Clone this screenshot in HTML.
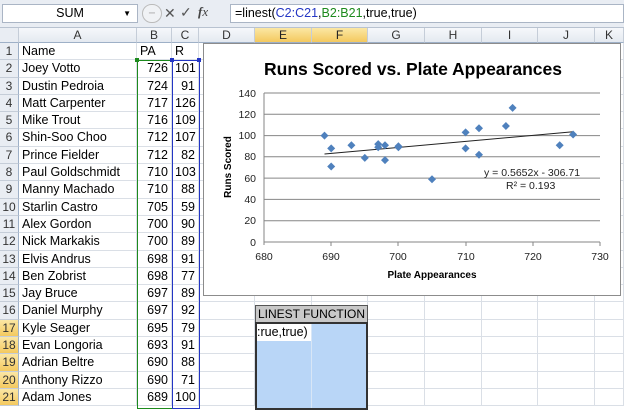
<!DOCTYPE html>
<html><head><meta charset="utf-8"><style>
*{margin:0;padding:0;box-sizing:border-box}
body{width:624px;height:410px;overflow:hidden;background:#fff;font-family:"Liberation Sans",Calibri,sans-serif;font-size:12.5px;position:relative;color:#000}
.abs{position:absolute}
.fb{left:0;top:0;width:624px;height:28px;background:#e9edf3;border-bottom:1px solid #b8c2d0}
.nm{left:2px;top:4px;width:136px;height:19px;background:#fff;border:1px solid #aab5c5;text-align:center;line-height:17px;font-size:12.5px}
.fx{left:230px;top:4px;width:394px;height:19px;background:#fff;border:1px solid #aab5c5;line-height:17px;padding-left:4px;font-size:12.5px}
.colh{top:28px;height:15px;background:linear-gradient(#f6f8fb,#e4e9f0);border-right:1px solid #c5cdd8;border-bottom:1px solid #9eb0c7;text-align:center;line-height:15px;color:#333;font-size:12px}
.colh.sel{background:linear-gradient(#fbe7a5,#f4c95f);color:#222}
.rowh{left:0;width:19px;background:#e9edf3;border-bottom:1px solid #c5cdd8;border-right:1px solid #9eb0c7;text-align:center;color:#333;font-size:12px}
.rowh.sel{background:linear-gradient(#fbe7a5,#f4c95f)}
.cell{border-bottom:1px solid #dadfe6;border-right:1px solid #dadfe6;white-space:nowrap;overflow:hidden;padding:0 3px;font-size:12.5px}
.r{text-align:right}
</style></head><body>
<div class="abs fb"></div>
<div class="abs nm">SUM <span style="position:absolute;right:6px;font-size:8px">▼</span></div>
<div class="abs" style="left:142px;top:4px;width:20px;height:19px;border:1px solid #bbb;border-radius:10px;background:#f0f2f5;color:#aaa;text-align:center;line-height:17px">−</div>
<div class="abs" style="left:164px;top:5px;font-size:14px;color:#555">✕</div>
<div class="abs" style="left:180px;top:4px;font-size:14px;color:#555">✓</div>
<div class="abs" style="left:198px;top:4px;font-size:13px;font-style:italic;font-family:'Liberation Serif',serif;color:#444"><b>f</b>x</div>
<div class="abs fx">=linest(<span style="color:#2436c4">C2:C21</span>,<span style="color:#1d8a1d">B2:B21</span>,true,true)</div>

<div class="abs colh" style="left:0;width:19px;background:#e9edf3"></div>
<div class="abs colh" style="left:19px;width:118px">A</div>
<div class="abs colh" style="left:137px;width:35px">B</div>
<div class="abs colh" style="left:172px;width:27px">C</div>
<div class="abs colh" style="left:199px;width:56px">D</div>
<div class="abs colh sel" style="left:255px;width:57px">E</div>
<div class="abs colh sel" style="left:312px;width:56px">F</div>
<div class="abs colh" style="left:368px;width:57px">G</div>
<div class="abs colh" style="left:425px;width:57px">H</div>
<div class="abs colh" style="left:482px;width:56px">I</div>
<div class="abs colh" style="left:538px;width:57px">J</div>
<div class="abs colh" style="left:595px;width:29px">K</div>

<div style="position:absolute;left:0;top:43px;width:624px">
<div style="display:grid;grid-template-columns:19px 118px 35px 27px 56px 57px 56px 57px 57px 56px 57px 29px;grid-auto-rows:17.3px;line-height:17px">
<div class="rowh">1</div><div class="cell">Name</div><div class="cell">PA</div><div class="cell">R</div><div class="cell"></div><div class="cell"></div><div class="cell"></div><div class="cell"></div><div class="cell"></div><div class="cell"></div><div class="cell"></div><div class="cell"></div>
<div class="rowh">2</div><div class="cell">Joey Votto</div><div class="cell r">726</div><div class="cell r">101</div><div class="cell"></div><div class="cell"></div><div class="cell"></div><div class="cell"></div><div class="cell"></div><div class="cell"></div><div class="cell"></div><div class="cell"></div>
<div class="rowh">3</div><div class="cell">Dustin Pedroia</div><div class="cell r">724</div><div class="cell r">91</div><div class="cell"></div><div class="cell"></div><div class="cell"></div><div class="cell"></div><div class="cell"></div><div class="cell"></div><div class="cell"></div><div class="cell"></div>
<div class="rowh">4</div><div class="cell">Matt Carpenter</div><div class="cell r">717</div><div class="cell r">126</div><div class="cell"></div><div class="cell"></div><div class="cell"></div><div class="cell"></div><div class="cell"></div><div class="cell"></div><div class="cell"></div><div class="cell"></div>
<div class="rowh">5</div><div class="cell">Mike Trout</div><div class="cell r">716</div><div class="cell r">109</div><div class="cell"></div><div class="cell"></div><div class="cell"></div><div class="cell"></div><div class="cell"></div><div class="cell"></div><div class="cell"></div><div class="cell"></div>
<div class="rowh">6</div><div class="cell">Shin-Soo Choo</div><div class="cell r">712</div><div class="cell r">107</div><div class="cell"></div><div class="cell"></div><div class="cell"></div><div class="cell"></div><div class="cell"></div><div class="cell"></div><div class="cell"></div><div class="cell"></div>
<div class="rowh">7</div><div class="cell">Prince Fielder</div><div class="cell r">712</div><div class="cell r">82</div><div class="cell"></div><div class="cell"></div><div class="cell"></div><div class="cell"></div><div class="cell"></div><div class="cell"></div><div class="cell"></div><div class="cell"></div>
<div class="rowh">8</div><div class="cell">Paul Goldschmidt</div><div class="cell r">710</div><div class="cell r">103</div><div class="cell"></div><div class="cell"></div><div class="cell"></div><div class="cell"></div><div class="cell"></div><div class="cell"></div><div class="cell"></div><div class="cell"></div>
<div class="rowh">9</div><div class="cell">Manny Machado</div><div class="cell r">710</div><div class="cell r">88</div><div class="cell"></div><div class="cell"></div><div class="cell"></div><div class="cell"></div><div class="cell"></div><div class="cell"></div><div class="cell"></div><div class="cell"></div>
<div class="rowh">10</div><div class="cell">Starlin Castro</div><div class="cell r">705</div><div class="cell r">59</div><div class="cell"></div><div class="cell"></div><div class="cell"></div><div class="cell"></div><div class="cell"></div><div class="cell"></div><div class="cell"></div><div class="cell"></div>
<div class="rowh">11</div><div class="cell">Alex Gordon</div><div class="cell r">700</div><div class="cell r">90</div><div class="cell"></div><div class="cell"></div><div class="cell"></div><div class="cell"></div><div class="cell"></div><div class="cell"></div><div class="cell"></div><div class="cell"></div>
<div class="rowh">12</div><div class="cell">Nick Markakis</div><div class="cell r">700</div><div class="cell r">89</div><div class="cell"></div><div class="cell"></div><div class="cell"></div><div class="cell"></div><div class="cell"></div><div class="cell"></div><div class="cell"></div><div class="cell"></div>
<div class="rowh">13</div><div class="cell">Elvis Andrus</div><div class="cell r">698</div><div class="cell r">91</div><div class="cell"></div><div class="cell"></div><div class="cell"></div><div class="cell"></div><div class="cell"></div><div class="cell"></div><div class="cell"></div><div class="cell"></div>
<div class="rowh">14</div><div class="cell">Ben Zobrist</div><div class="cell r">698</div><div class="cell r">77</div><div class="cell"></div><div class="cell"></div><div class="cell"></div><div class="cell"></div><div class="cell"></div><div class="cell"></div><div class="cell"></div><div class="cell"></div>
<div class="rowh">15</div><div class="cell">Jay Bruce</div><div class="cell r">697</div><div class="cell r">89</div><div class="cell"></div><div class="cell"></div><div class="cell"></div><div class="cell"></div><div class="cell"></div><div class="cell"></div><div class="cell"></div><div class="cell"></div>
<div class="rowh">16</div><div class="cell">Daniel Murphy</div><div class="cell r">697</div><div class="cell r">92</div><div class="cell"></div><div class="cell"></div><div class="cell"></div><div class="cell"></div><div class="cell"></div><div class="cell"></div><div class="cell"></div><div class="cell"></div>
<div class="rowh sel">17</div><div class="cell">Kyle Seager</div><div class="cell r">695</div><div class="cell r">79</div><div class="cell"></div><div class="cell"></div><div class="cell"></div><div class="cell"></div><div class="cell"></div><div class="cell"></div><div class="cell"></div><div class="cell"></div>
<div class="rowh sel">18</div><div class="cell">Evan Longoria</div><div class="cell r">693</div><div class="cell r">91</div><div class="cell"></div><div class="cell"></div><div class="cell"></div><div class="cell"></div><div class="cell"></div><div class="cell"></div><div class="cell"></div><div class="cell"></div>
<div class="rowh sel">19</div><div class="cell">Adrian Beltre</div><div class="cell r">690</div><div class="cell r">88</div><div class="cell"></div><div class="cell"></div><div class="cell"></div><div class="cell"></div><div class="cell"></div><div class="cell"></div><div class="cell"></div><div class="cell"></div>
<div class="rowh sel">20</div><div class="cell">Anthony Rizzo</div><div class="cell r">690</div><div class="cell r">71</div><div class="cell"></div><div class="cell"></div><div class="cell"></div><div class="cell"></div><div class="cell"></div><div class="cell"></div><div class="cell"></div><div class="cell"></div>
<div class="rowh sel">21</div><div class="cell">Adam Jones</div><div class="cell r">689</div><div class="cell r">100</div><div class="cell"></div><div class="cell"></div><div class="cell"></div><div class="cell"></div><div class="cell"></div><div class="cell"></div><div class="cell"></div><div class="cell"></div>
</div></div>

<div class="abs" style="left:137px;top:60px;width:36px;height:349px;border:1px solid #1d8a1d"></div>
<div class="abs" style="left:172px;top:60px;width:28px;height:349px;border:1px solid #2436c4"></div>
<div class="abs" style="left:135px;top:58px;width:4px;height:4px;background:#1d8a1d"></div>
<div class="abs" style="left:170px;top:58px;width:4px;height:4px;background:#2436c4"></div>
<div class="abs" style="left:197px;top:58px;width:4px;height:4px;background:#2436c4"></div>

<div class="abs" style="left:255px;top:305px;width:113px;height:18px;background:#c8c8c8;border:1px solid #555;text-align:center;line-height:16px;font-size:12px">LINEST FUNCTION</div>
<div class="abs" style="left:255px;top:322px;width:113px;height:88px;background:#b9d6f7;border:2px solid #333"></div>
<div class="abs" style="left:311px;top:324px;width:1px;height:84px;background:#d8e6f6"></div>
<div class="abs" style="left:257px;top:324px;width:54px;height:17px;background:#fff;line-height:16px;font-size:12.5px">:rue,true)</div>

<svg class="abs" style="left:0;top:0" width="624" height="410" font-family="Liberation Sans, sans-serif">
<rect x="203.5" y="43.5" width="417" height="252" fill="#fff" stroke="#8c8c8c"/>
<text x="413" y="75" text-anchor="middle" font-size="17.5" font-weight="bold">Runs Scored vs. Plate Appearances</text>
<g stroke="#868686" stroke-width="1">
<line x1="264" y1="93" x2="600" y2="93"/><line x1="264" y1="114.3" x2="600" y2="114.3"/><line x1="264" y1="135.6" x2="600" y2="135.6"/><line x1="264" y1="156.8" x2="600" y2="156.8"/><line x1="264" y1="178.1" x2="600" y2="178.1"/><line x1="264" y1="199.4" x2="600" y2="199.4"/><line x1="264" y1="220.7" x2="600" y2="220.7"/><line x1="264" y1="242" x2="600" y2="242"/>
<line x1="264" y1="93" x2="264" y2="245"/>
<line x1="331" y1="242" x2="331" y2="246"/><line x1="398" y1="242" x2="398" y2="246"/><line x1="466" y1="242" x2="466" y2="246"/><line x1="533" y1="242" x2="533" y2="246"/><line x1="600" y1="242" x2="600" y2="246"/>
</g>
<g font-size="10.5" text-anchor="end" fill="#222">
<text x="256" y="97">140</text><text x="256" y="118">120</text><text x="256" y="139">100</text><text x="256" y="160">80</text><text x="256" y="182">60</text><text x="256" y="203">40</text><text x="256" y="224">20</text><text x="256" y="246">0</text>
</g>
<g font-size="10.5" text-anchor="middle" fill="#222">
<text x="264" y="260">680</text><text x="331" y="260">690</text><text x="398" y="260">700</text><text x="466" y="260">710</text><text x="533" y="260">720</text><text x="600" y="260">730</text>
</g>
<text x="432" y="278" text-anchor="middle" font-size="10" font-weight="bold">Plate Appearances</text>
<text transform="translate(231,167) rotate(-90)" text-anchor="middle" font-size="10" font-weight="bold">Runs Scored</text>
<line x1="324.5" y1="154" x2="573.1" y2="131.8" stroke="#222" stroke-width="1"/>
<g fill="#4f81bd">
<path d="M573.1 130.5l4 4-4 4-4-4z"/><path d="M559.7 141.2l4 4-4 4-4-4z"/><path d="M512.6 103.9l4 4-4 4-4-4z"/><path d="M505.9 122l4 4-4 4-4-4z"/><path d="M479 124.2l4 4-4 4-4-4z"/><path d="M479 150.8l4 4-4 4-4-4z"/><path d="M465.6 128.4l4 4-4 4-4-4z"/><path d="M465.6 144.4l4 4-4 4-4-4z"/><path d="M432 175.2l4 4-4 4-4-4z"/><path d="M398.4 142.2l4 4-4 4-4-4z"/><path d="M398.4 143.3l4 4-4 4-4-4z"/><path d="M385 141.2l4 4-4 4-4-4z"/><path d="M385 156.1l4 4-4 4-4-4z"/><path d="M378.2 143.3l4 4-4 4-4-4z"/><path d="M378.2 140.1l4 4-4 4-4-4z"/><path d="M364.8 153.9l4 4-4 4-4-4z"/><path d="M351.4 141.2l4 4-4 4-4-4z"/><path d="M331.2 144.4l4 4-4 4-4-4z"/><path d="M331.2 162.5l4 4-4 4-4-4z"/><path d="M324.5 131.6l4 4-4 4-4-4z"/>
</g>
<text x="484" y="176" font-size="10.5" fill="#222">y = 0.5652x - 306.71</text>
<text x="506" y="189" font-size="10.5" fill="#222">R² = 0.193</text>
</svg>
</body></html>
